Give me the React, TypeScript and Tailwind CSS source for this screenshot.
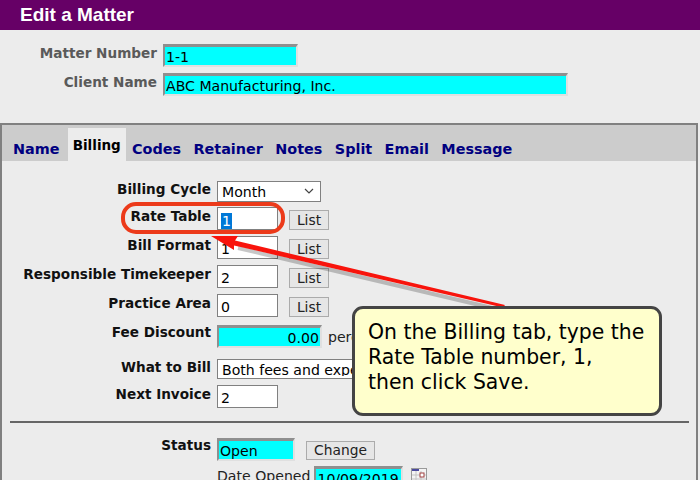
import type { ReactNode } from "react";

const TABS = ["Name", "Billing", "Codes", "Retainer", "Notes", "Split", "Email", "Message"];

const plainInput =
  "h-[23px] w-[61px] border border-[#808080] bg-white px-[3px] pt-[3px] text-[14.1px] text-black outline-none";
const cyanInput =
  "h-[23px] border-2 border-t-[3px] border-[#e0e0e0] border-t-[#8f8f8f] border-l-[#8f8f8f] bg-[#00ffff] px-[1px] pt-[1px] text-[14.1px] text-black outline-none";

function Row({ label, className, children }: { label: string; className: string; children: ReactNode }) {
  return (
    <div className={`flex items-start ${className}`}>
      <label className="mt-[1px] w-[211px] shrink-0 text-right text-[13.6px] leading-[17px] font-bold text-[#111]">{label}</label>
      <div className="ml-[6px] flex items-start">{children}</div>
    </div>
  );
}

function ListButton() {
  return (
    <button
      type="button"
      className="mt-[3px] ml-[11px] h-[20px] w-[40px] border border-[#ababab] bg-[#e6e6e6] text-[13.8px] leading-[18px] text-[#222]"
    >
      List
    </button>
  );
}

function SelectBox({ value, className }: { value: string; className: string }) {
  return (
    <div className={`relative ${className}`}>
      <select
        defaultValue={value}
        className="h-full w-full appearance-none border border-[#808080] bg-white pb-[2px] pl-[4px] text-[14.1px] text-black outline-none"
      >
        <option>{value}</option>
      </select>
      <svg width="10" height="6" viewBox="0 0 10 6" className="pointer-events-none absolute top-[8px] right-[7px]">
        <path d="M1 1l4 4 4-4" fill="none" stroke="#444" strokeWidth="1.2" />
      </svg>
    </div>
  );
}

function CalendarIcon() {
  return (
    <svg width="16" height="16" viewBox="0 0 16 16" className="mt-[2px] ml-[8px] shrink-0">
      <rect x="0.5" y="0.5" width="15" height="15" fill="#f4f4f4" stroke="#9a9a9a" />
      <rect x="1" y="1" width="7" height="2" fill="#4a4a9e" />
      <path d="M1 7h14M1 11h14M5 3v12M10 3v12" stroke="#c4c4c4" />
      <rect x="9" y="5" width="4" height="4" fill="#fff" stroke="#a04040" />
    </svg>
  );
}

export default function App() {
  return (
    <div className="relative h-[480px] w-[700px] overflow-hidden bg-[#ececec] font-['DejaVu_Sans',sans-serif]">
      <div className="flex h-[30px] items-center bg-[#660066] pl-[20px] font-['Liberation_Sans',sans-serif] text-[19px] font-bold text-white">
        Edit a Matter
      </div>

      <div className="h-[93px] pt-[14px]">
        <div className="flex items-start">
          <label className="w-[157px] text-right text-[13.6px] leading-[18px] font-bold text-[#5a5a5a]">Matter Number</label>
          <input readOnly value="1-1" className={`${cyanInput} ml-[6px] w-[135px]`} />
        </div>
        <div className="mt-[6px] flex items-start">
          <label className="w-[157px] text-right text-[13.6px] leading-[18px] font-bold text-[#5a5a5a]">Client Name</label>
          <input readOnly value="ABC Manufacturing, Inc." className={`${cyanInput} ml-[6px] w-[405px]`} />
        </div>
      </div>

      <div className="mr-[2px] border-2 border-b-0 border-[#808080]">
        <div className="flex h-[36px] items-end bg-[#cccccc] pl-[11px] text-[14.4px] font-bold text-[#000080]">
          {TABS.map((tab) =>
            tab === "Billing" ? (
              <span key={tab} className="ml-[2px] h-[33px] bg-[#ececec] px-[5px] pt-[8px] text-[13.5px] leading-[18px] text-black">
                {tab}
              </span>
            ) : (
              <span key={tab} className="px-[6.2px] pb-[3px] leading-[18px] first:pl-0">
                {tab}
              </span>
            ),
          )}
        </div>

        <div className="-ml-[2px]">
          <Row label="Billing Cycle" className="pt-[19px]">
            <SelectBox value="Month" className="h-[21px] w-[104px]" />
          </Row>
          <Row label="Rate Table" className="mt-[6px]">
            <div className={plainInput}>
              <span className="bg-[#0078d7] px-[1px] text-white">1</span>
            </div>
            <ListButton />
          </Row>
          <Row label="Bill Format" className="mt-[6px]">
            <input readOnly value="1" className={plainInput} />
            <ListButton />
          </Row>
          <Row label="Responsible Timekeeper" className="mt-[6px]">
            <input readOnly value="2" className={plainInput} />
            <ListButton />
          </Row>
          <Row label="Practice Area" className="mt-[6px]">
            <input readOnly value="0" className={plainInput} />
            <ListButton />
          </Row>
          <Row label="Fee Discount" className="mt-[8px] [&>label]:-mt-[1px]">
            <input readOnly value="0.00" className={`${cyanInput} w-[105px] text-right`} />
            <span className="mt-[3px] ml-[6px] text-[14.1px] leading-[18px] text-[#222]">percent</span>
          </Row>
          <Row label="What to Bill" className="mt-[10px]">
            <SelectBox value="Both fees and expenses" className="h-[20px] w-[190px]" />
          </Row>
          <Row label="Next Invoice" className="mt-[7px]">
            <input readOnly value="2" className={plainInput} />
          </Row>

          <hr className="mt-[13px] ml-[10px] w-[679px] border-0 border-t-2 border-[#666]" />

          <Row label="Status" className="mt-[15px] [&>label]:-mt-[1px]">
            <input readOnly value="Open" className={`${cyanInput} h-[22px] w-[78px]`} />
            <button
              type="button"
              className="mt-[3px] ml-[11px] h-[19px] w-[69px] border border-[#ababab] bg-[#e6e6e6] text-[13.8px] leading-[17px] text-[#222]"
            >
              Change
            </button>
          </Row>
          <div className="mt-[5px] ml-[217px] flex items-start">
            <span className="mt-[1px] text-[14.1px] leading-[18px] text-[#222]">Date Opened</span>
            <input readOnly value="10/09/2019" className={`${cyanInput} ml-[4px] w-[89px]`} />
            <CalendarIcon />
          </div>
        </div>
      </div>

      {/* annotation overlays */}
      <div className="absolute top-[202px] left-[121px] h-[32px] w-[164px] rounded-[15px] border-[4px] border-[#ec3a1a]" />

      <svg width="700" height="480" viewBox="0 0 700 480" className="pointer-events-none absolute top-0 left-0">
        <path d="M505 311 L238 248" stroke="#000" strokeOpacity="0.22" strokeWidth="4" />
        <path d="M211 236 L238 236 L235 240.5 L505 305 L503 307.5 L234 245.5 L234 250 Z" fill="#f8140c" />
      </svg>

      <div className="absolute top-[306px] left-[352px] h-[110px] w-[310px] rounded-[11px] border-[3px] border-[#444] bg-[#ffffcc] pt-[11px] pl-[13px] text-[20.4px] leading-[25px] text-black">
        On the Billing tab, type the
        <br />
        Rate Table number, 1,
        <br />
        then click Save.
      </div>
    </div>
  );
}
